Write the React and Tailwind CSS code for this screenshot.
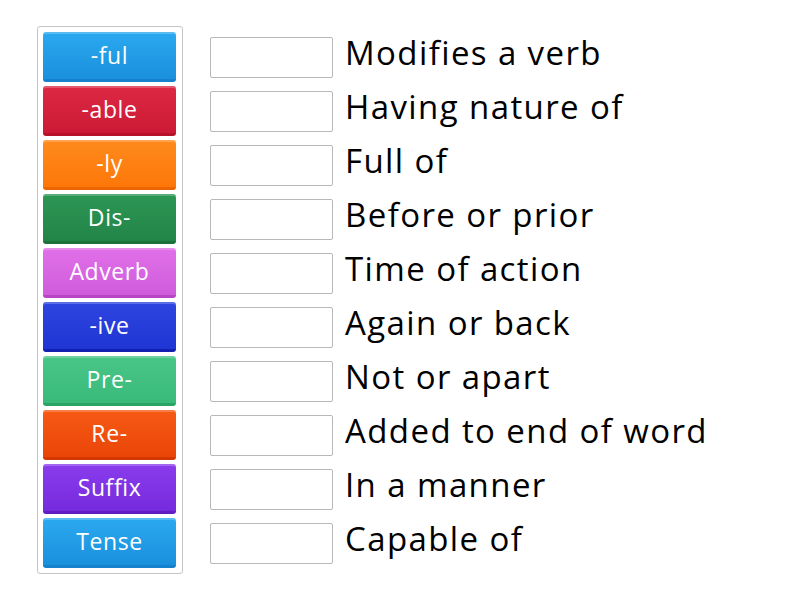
import React from "react";

const tiles = [
  { label: "-ful", cls: "from-[#2aa9f0] to-[#1a90dc] border-[#1580cc]" },
  { label: "-able", cls: "from-[#dc2843] to-[#cc1935] border-[#b8122b]" },
  { label: "-ly", cls: "from-[#ff8a1c] to-[#fd7707] border-[#ec6500]" },
  { label: "Dis-", cls: "from-[#2c9655] to-[#228547] border-[#1b7139]" },
  { label: "Adverb", cls: "from-[#e070e8] to-[#d05cdc] border-[#b845c4]" },
  { label: "-ive", cls: "from-[#2e45e0] to-[#1f35d4] border-[#1120b0]" },
  { label: "Pre-", cls: "from-[#48c688] to-[#3aba7a] border-[#2aa464]" },
  { label: "Re-", cls: "from-[#f65a14] to-[#ea4508] border-[#d43800]" },
  { label: "Suffix", cls: "from-[#8a3cec] to-[#762ade] border-[#5f1cc4]" },
  { label: "Tense", cls: "from-[#2aa9f0] to-[#1a90dc] border-[#1580cc]" },
];

const clues = [
  "Modifies a verb",
  "Having nature of",
  "Full of",
  "Before or prior",
  "Time of action",
  "Again or back",
  "Not or apart",
  "Added to end of word",
  "In a manner",
  "Capable of",
];

export default function App() {
  return (
    <div
      className="w-[800px] h-[600px] bg-white flex items-start"
      style={{ fontFamily: "'Open Sans', Lato, sans-serif" }}
    >
      {/* word tiles */}
      <div className="ml-[37px] mt-[26px] w-[146px] pt-[5px] pb-[5px] pl-[5px] border border-[#c4c4c4] rounded-[3px] flex flex-col gap-[4px]">
        {tiles.map((t) => (
          <div
            key={t.label}
            className={
              "h-[50px] w-[133px] rounded-[3px] bg-linear-to-b border-b-[3px] flex items-center justify-center text-white text-[23px] tracking-[0.6px] shadow-[inset_0_2px_0_rgba(255,255,255,0.22)] " +
              t.cls
            }
          >
            {t.label}
          </div>
        ))}
      </div>

      {/* drop targets + clues */}
      <div className="ml-[27px] mt-[32px] flex flex-col gap-[4px]">
        {clues.map((c) => (
          <div key={c} className="h-[50px] flex items-center">
            <div className="w-[123px] h-[41px] border border-[#b8b8b8] rounded-[2px] bg-white" />
            <span className="ml-[12px] pb-[9px] text-[33px] tracking-[1.4px] leading-none text-black">{c}</span>
          </div>
        ))}
      </div>
    </div>
  );
}
